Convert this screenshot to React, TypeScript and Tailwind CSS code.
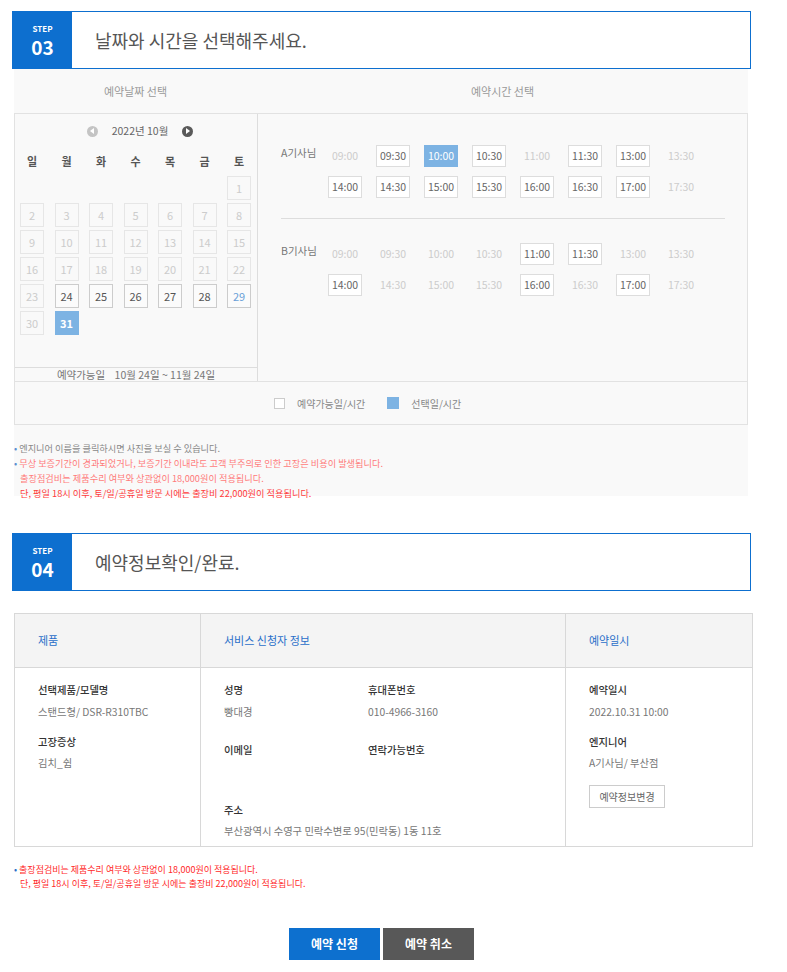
import React from "react";

const FONT = { fontFamily: '"Noto Sans CJK KR", "Noto Sans", sans-serif' };

type Slot = { t: string; s: "d" | "e" | "x" };

const A_ROWS: Slot[][] = [
  [
    { t: "09:00", s: "d" },
    { t: "09:30", s: "e" },
    { t: "10:00", s: "x" },
    { t: "10:30", s: "e" },
    { t: "11:00", s: "d" },
    { t: "11:30", s: "e" },
    { t: "13:00", s: "e" },
    { t: "13:30", s: "d" },
  ],
  [
    { t: "14:00", s: "e" },
    { t: "14:30", s: "e" },
    { t: "15:00", s: "e" },
    { t: "15:30", s: "e" },
    { t: "16:00", s: "e" },
    { t: "16:30", s: "e" },
    { t: "17:00", s: "e" },
    { t: "17:30", s: "d" },
  ],
];

const B_ROWS: Slot[][] = [
  [
    { t: "09:00", s: "d" },
    { t: "09:30", s: "d" },
    { t: "10:00", s: "d" },
    { t: "10:30", s: "d" },
    { t: "11:00", s: "e" },
    { t: "11:30", s: "e" },
    { t: "13:00", s: "d" },
    { t: "13:30", s: "d" },
  ],
  [
    { t: "14:00", s: "e" },
    { t: "14:30", s: "d" },
    { t: "15:00", s: "d" },
    { t: "15:30", s: "d" },
    { t: "16:00", s: "e" },
    { t: "16:30", s: "d" },
    { t: "17:00", s: "e" },
    { t: "17:30", s: "d" },
  ],
];

function StepHeader({ num, title }: { num: string; title: string }) {
  return (
    <div className="ml-[12px] flex h-[58px] w-[739px] border border-[#0d6fcf] bg-white">
      <div className="flex w-[59px] flex-col items-center justify-center bg-[#0d6fcf] text-white">
        <span className="text-[8px] font-bold leading-[10px]">STEP</span>
        <span className="mt-[3px] text-[19px] font-bold leading-[20px]">{num}</span>
      </div>
      <div className="flex items-center pl-[23px] text-[18px] text-[#555]">{title}</div>
    </div>
  );
}

function TimeSlot({ slot }: { slot: Slot }) {
  const base = "flex h-[22px] w-[34px] items-center justify-center text-[10.5px]";
  if (slot.s === "x") return <div className={base + " bg-[#7db3e3] text-white"}>{slot.t}</div>;
  if (slot.s === "e")
    return <div className={base + " border border-[#ddd] bg-white text-[#666]"}>{slot.t}</div>;
  return <div className={base + " text-[#ccc]"}>{slot.t}</div>;
}

function Engineer({ name, rows }: { name: string; rows: Slot[][] }) {
  return (
    <div className="flex">
      <div className="w-[47px] text-[10.5px] leading-[16px] text-[#777]">{name}</div>
      <div className="grid grid-cols-[repeat(8,34px)] gap-x-[14px] gap-y-[9px]">
        {rows.flat().map((s, i) => (
          <TimeSlot key={i} slot={s} />
        ))}
      </div>
    </div>
  );
}

function Calendar() {
  const cells: (number | null)[] = [null, null, null, null, null, null];
  for (let d = 1; d <= 31; d++) cells.push(d);
  return (
    <div className="flex w-[243px] flex-col border-r border-[#ddd]">
      <div className="mt-[8px] flex h-[18px] items-center justify-center pl-[8px]">
        <span className="flex h-[11px] w-[11px] items-center justify-center rounded-full bg-[#c4c4c4]">
          <span className="mr-[1px] h-0 w-0 border-y-[3px] border-r-[4px] border-y-transparent border-r-white" />
        </span>
        <span className="mx-[14px] text-[10.5px] text-[#666]">2022년 10월</span>
        <span className="flex h-[11px] w-[11px] items-center justify-center rounded-full bg-[#5a5a5a]">
          <span className="ml-[1px] h-0 w-0 border-y-[3px] border-l-[4px] border-y-transparent border-l-white" />
        </span>
      </div>
      <div className="mt-[12px] grid grid-cols-[repeat(7,24px)] gap-x-[10.5px] pl-[5px] text-[11px] font-bold leading-[18px] text-[#555]">
        {["일", "월", "화", "수", "목", "금", "토"].map((d) => (
          <div key={d} className="text-center">
            {d}
          </div>
        ))}
      </div>
      <div className="mt-[6px] grid grid-cols-[repeat(7,24px)] gap-x-[10.5px] gap-y-[3px] pl-[5px]">
        {cells.map((d, i) => {
          if (d === null) return <div key={i} className="h-[24px]" />;
          const base = "flex h-[24px] w-[24px] items-center justify-center text-[11px]";
          if (d === 31)
            return (
              <div key={i} className={base + " bg-[#7db3e3] font-bold text-white"}>
                {d}
              </div>
            );
          if (d >= 24 && d <= 29)
            return (
              <div
                key={i}
                className={
                  base + " border border-[#ccc] bg-[#fbfbfb] " + (d === 29 ? "text-[#6a9fd8]" : "text-[#555]")
                }
              >
                {d}
              </div>
            );
          return (
            <div key={i} className={base + " border border-[#e6e6e6] text-[#ccc]"}>
              {d}
            </div>
          );
        })}
      </div>
      <div className="mt-auto h-[14px] border-t border-[#ddd] text-center text-[10.5px] leading-[13px] text-[#777]">
        예약가능일&nbsp;&nbsp;&nbsp; 10월 24일 ~ 11월 24일
      </div>
    </div>
  );
}

export default function App() {
  return (
    <div className="relative min-h-[972px] w-[787px] bg-white pt-[11px]" style={FONT}>
      <StepHeader num="03" title="날짜와 시간을 선택해주세요." />

      <div className="ml-[14px] h-[427px] w-[734px] bg-[#f9f9f9]">
        <div className="flex h-[44px] items-center text-[11px] text-[#999]">
          <div className="w-[243px] text-center">예약날짜 선택</div>
          <div className="flex-1 text-center">예약시간 선택</div>
        </div>
        <div className="border border-[#e2e2e2]">
          <div className="flex h-[267px]">
            <Calendar />
            <div className="flex-1 pl-[23px] pt-[31px]">
              <Engineer name="A기사님" rows={A_ROWS} />
              <div className="mb-[24px] mt-[20px] w-[444px] border-t border-[#ddd]" />
              <Engineer name="B기사님" rows={B_ROWS} />
            </div>
          </div>
          <div className="flex h-[43px] items-center border-t border-[#e2e2e2] pl-[259px] text-[10px] text-[#888]">
            <span className="h-[11px] w-[11px] border border-[#ccc] bg-white" />
            <span className="ml-[12px]">예약가능일/시간</span>
            <span className="ml-[22px] h-[12px] w-[12px] bg-[#7db3e3]" />
            <span className="ml-[12px]">선택일/시간</span>
          </div>
        </div>
        <div className="mt-[16px] text-[9.2px] leading-[15px]">
          <p className="text-[#888]">
            <span className="text-[#5b8fd0]">•</span> 엔지니어 이름을 클릭하시면 사진을 보실 수 있습니다.
          </p>
          <p className="text-[#ff7b7b]">
            <span className="text-[#5b8fd0]">•</span> 무상 보증기간이 경과되었거나, 보증기간 이내라도 고객 부주의로 인한 고장은 비용이 발생됩니다.
          </p>
          <p className="pl-[6px] text-[#ff7b7b]">출장점검비는 제품수리 여부와 상관없이 18,000원이 적용됩니다.</p>
          <p className="pl-[6px] text-[#ff3b3b]">단, 평일 18시 이후, 토/일/공휴일 방문 시에는 출장비 22,000원이 적용됩니다.</p>
        </div>
      </div>

      <div className="mt-[37px]">
        <StepHeader num="04" title="예약정보확인/완료." />
      </div>

      <div className="ml-[14px] mt-[22px] w-[739px] border border-[#d8d8d8]">
        <div className="flex h-[54px] border-b border-[#d8d8d8] bg-[#f4f4f4] text-[11px] text-[#2a6fc9]">
          <div className="flex w-[186px] items-center border-r border-[#d8d8d8] pl-[23px]">제품</div>
          <div className="flex w-[365px] items-center border-r border-[#d8d8d8] pl-[23px]">서비스 신청자 정보</div>
          <div className="flex flex-1 items-center pl-[23px]">예약일시</div>
        </div>
        <div className="flex h-[178px] text-[10.3px] leading-[20px]">
          <div className="w-[186px] border-r border-[#d8d8d8] pl-[23px] pt-[12px]">
            <div className="font-medium text-[#333]">선택제품/모델명</div>
            <div className="mt-[2px] text-[#777]">스탠드형/ DSR-R310TBC</div>
            <div className="mt-[10px] font-medium text-[#333]">고장증상</div>
            <div className="mt-[1px] text-[#777]">김치_쉼</div>
          </div>
          <div className="w-[365px] border-r border-[#d8d8d8] pl-[23px] pt-[12px]">
            <div className="grid grid-cols-[144px_1fr]">
              <div className="font-medium text-[#333]">성명</div>
              <div className="font-medium text-[#333]">휴대폰번호</div>
              <div className="mt-[2px] text-[#777]">빵대경</div>
              <div className="mt-[2px] text-[#777]">010-4966-3160</div>
              <div className="mt-[18px] font-medium text-[#333]">이메일</div>
              <div className="mt-[18px] font-medium text-[#333]">연락가능번호</div>
              <div className="mt-[2px] h-[20px]" />
              <div className="mt-[2px] h-[20px]" />
            </div>
            <div className="mt-[18px] font-medium text-[#333]">주소</div>
            <div className="mt-[1px] text-[#777]">부산광역시 수영구 민락수변로 95(민락동) 1동 11호</div>
          </div>
          <div className="flex-1 pl-[23px] pt-[12px]">
            <div className="font-medium text-[#333]">예약일시</div>
            <div className="mt-[2px] text-[#777]">2022.10.31 10:00</div>
            <div className="mt-[10px] font-medium text-[#333]">엔지니어</div>
            <div className="mt-[1px] text-[#777]">A기사님/ 부산점</div>
            <button className="mt-[12px] flex h-[23px] w-[76px] items-center justify-center border border-[#ccc] bg-white text-[10px] text-[#666]">
              예약정보변경
            </button>
          </div>
        </div>
      </div>

      <div className="mt-[16px] pl-[14px] text-[9px] leading-[14px] text-[#ff2a2a]">
        <p>
          <span className="text-[#2a6fc9]">•</span> 출장점검비는 제품수리 여부와 상관없이 18,000원이 적용됩니다.
        </p>
        <p className="pl-[6px]">단, 평일 18시 이후, 토/일/공휴일 방문 시에는 출장비 22,000원이 적용됩니다.</p>
      </div>

      <div className="mt-[37px] flex pl-[289px]">
        <button className="h-[32px] w-[91px] bg-[#0d70cf] text-[12px] font-bold text-white">예약 신청</button>
        <button className="ml-[3px] h-[32px] w-[91px] bg-[#585858] text-[12px] font-bold text-white">예약 취소</button>
      </div>
    </div>
  );
}
